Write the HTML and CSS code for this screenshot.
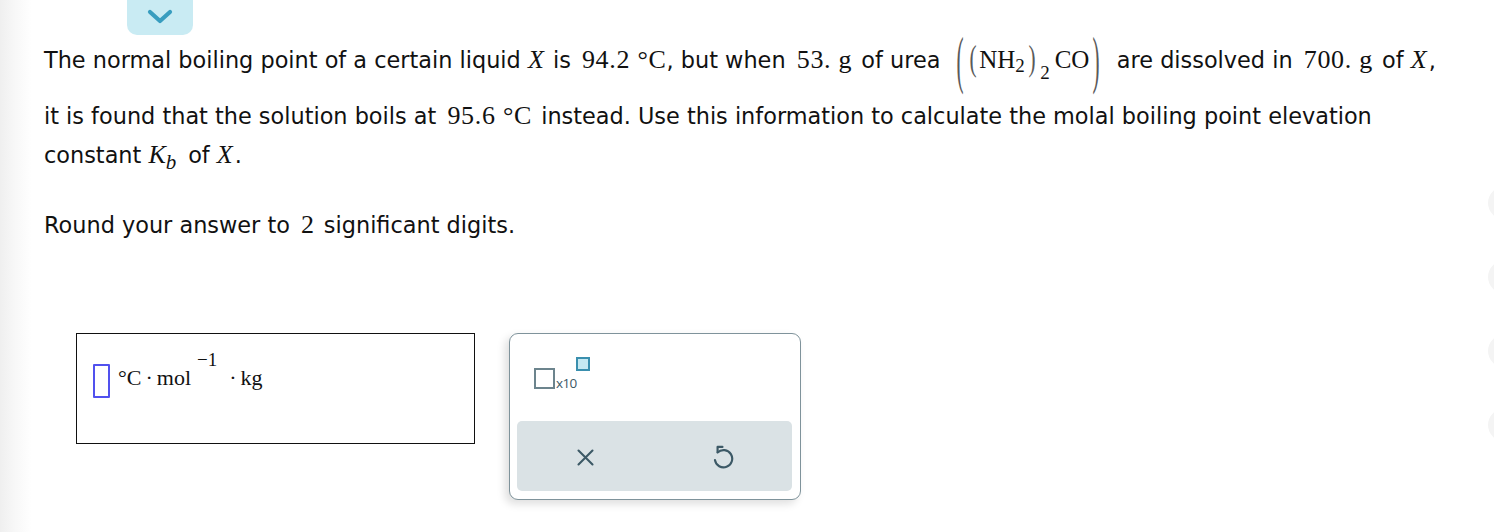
FILE: index.html
```html
<!DOCTYPE html>
<html>
<head>
<meta charset="utf-8">
<link rel="stylesheet" href="styles.css">
</head>
<body>
<div class="rail">
  <span class="dot"></span><span class="dot"></span><span class="dot"></span><span class="dot"></span>
</div>
<main class="page">
  <div class="tab">
    <svg width="26" height="16" viewBox="0 0 26 16"><path d="M3 3 L13 12 L23 3" fill="none" stroke="#389dbf" stroke-width="4.2" stroke-linecap="round" stroke-linejoin="round"/></svg>
  </div>

  <p class="q q1"><span class="l1">The normal boiling point of a certain liquid <i class="m v">X</i> is <span class="m tight">94.2 °C</span>, but when <span class="m">53. g</span> of urea <span class="chem m"><span class="bp">(</span><span class="ip">(</span>NH<sub class="s1">2</sub><span class="ip">)</span><sub class="s2">2</sub>CO<span class="bp">)</span></span> are dissolved in <span class="m">700. g</span> of <i class="m v">X</i>,</span><br>it is found that the solution boils at <span class="m">95.6 °C</span> instead. Use this information to calculate the molal boiling point elevation<br>constant <i class="m v">K</i><sub class="m kb">b</sub> of <i class="m v">X</i>.</p>

  <p class="q q2">Round your answer to <span class="m">2</span> significant digits.</p>

  <div class="answer-row">
    <div class="answer-box">
      <span class="slot"></span>
      <span class="unit">°C<span class="dotop">·</span>mol<sup class="exp">−1</sup><span class="dotop">·</span>kg</span>
    </div>

    <div class="tools">
      <div class="sci">
        <span class="sci-box"></span><span class="sci-x">x10</span><span class="sci-exp"></span>
      </div>
      <div class="actions">
        <button class="act" aria-label="clear">
          <svg width="24" height="24" viewBox="0 0 24 24"><path d="M4 4 L20 20 M20 4 L4 20" stroke="#3c5966" stroke-width="2.4" stroke-linecap="round" fill="none"/></svg>
        </button>
        <button class="act" aria-label="undo">
          <svg width="26" height="26" viewBox="0 0 24 24"><path d="M11.5 3.6 H7 V8.4" stroke="#3c5966" stroke-width="2" stroke-linecap="round" stroke-linejoin="round" fill="none"/><path d="M7 8.7 A8 8 0 1 1 4.6 15.8" stroke="#3c5966" stroke-width="2" stroke-linecap="round" fill="none"/></svg>
        </button>
      </div>
    </div>
  </div>
</main>
</body>
</html>
```

FILE: styles.css
```css
html, body {
  margin: 0;
  padding: 0;
}

body {
  width: 1494px;
  height: 532px;
  overflow: hidden;
  position: relative;
  background:
    linear-gradient(to right, #efefef 0px, #f7f7f7 14px, #ffffff 32px),
    #ffffff;
  font-family: "DejaVu Sans", Verdana, sans-serif;
  color: #111;
}

.page {
  padding-left: 44px;
}

.tab {
  margin-left: 83px;
  width: 66px;
  height: 35px;
  background: #c9ebf3;
  border-radius: 0 0 10px 10px;
  display: flex;
  align-items: center;
  justify-content: center;
}

.tab svg {
  margin-top: -2px;
}

.q {
  margin: 0;
  font-size: 22.4px;
  line-height: 39px;
  white-space: nowrap;
}

.q1 {
  margin-top: 1px;
}

.l1 {
  display: inline-block;
  height: 61px;
  line-height: 48px;
}

.m {
  font-family: "Liberation Serif", "Times New Roman", serif;
  font-size: 26px;
  line-height: 1;
  letter-spacing: 0.7px;
  margin: 0 2px 0 4px;
}

.m.tight {
  margin-right: 0;
}

i.m {
  font-style: italic;
}

.v {
  letter-spacing: 0;
  margin: 0 2px 0 0;
}

.kb {
  font-style: italic;
  font-size: 21px;
  vertical-align: -6px;
  line-height: 0;
  margin: 0 4px 0 -2px;
}

.chem {
  display: inline-block;
  letter-spacing: 0;
  margin: 0 6px 0 5px;
  font-size: 25px;
}

.chem sub {
  font-size: 19px;
  line-height: 0;
}

.chem .s1 {
  vertical-align: -4px;
  margin-right: 1px;
}

.chem .s2 {
  vertical-align: -11px;
  margin: 0 5px 0 2px;
}

.bp {
  display: inline-block;
  color: #5a5a5a;
  transform: translateY(3px) scale(0.85, 2.55);
  transform-origin: 50% 58%;
  margin: 0 3px;
}

.ip {
  display: inline-block;
  color: #5a5a5a;
  transform: scale(0.85, 1.45);
  transform-origin: 50% 62%;
  margin: 0 2px;
}

.q2 {
  margin-top: 31px;
}

.answer-row {
  display: flex;
  align-items: flex-start;
  gap: 34px;
  margin-top: 88px;
  margin-left: 32px;
}

.answer-box {
  box-sizing: border-box;
  width: 399px;
  height: 111px;
  border: 1px solid #111;
  display: flex;
  align-items: flex-start;
  padding: 30px 0 0 16px;
}

.slot {
  box-sizing: border-box;
  width: 17px;
  height: 34px;
  border: 2px solid #5151ee;
  border-radius: 1px;
  flex: none;
}

.unit {
  font-family: "Liberation Serif", "Times New Roman", serif;
  margin-left: 8px;
  margin-top: -4px;
  font-size: 22px;
  line-height: 26px;
  white-space: nowrap;
}

.dotop {
  margin: 0 4px;
}

.exp {
  font-size: 19px;
  vertical-align: 19px;
  line-height: 0;
  margin: 0 8px 0 6px;
}

.tools {
  box-sizing: border-box;
  width: 292px;
  height: 167px;
  border: 1px solid #7f939b;
  border-radius: 9px;
  background: #fff;
  box-shadow: -4px 4px 9px rgba(0, 0, 0, 0.13);
  padding: 23px 8px 8px 7px;
  display: flex;
  flex-direction: column;
  justify-content: space-between;
}

.sci {
  display: flex;
  align-items: flex-end;
  margin-left: 17px;
  height: 32px;
}

.sci-box {
  box-sizing: border-box;
  width: 21px;
  height: 21px;
  border: 2.5px solid #6c848d;
  background: #fff;
}

.sci-x {
  font-family: "Open Sans", "DejaVu Sans", sans-serif;
  font-size: 13.5px;
  color: #3c5966;
  letter-spacing: -0.6px;
  margin-left: 1px;
  line-height: 12px;
}

.sci-exp {
  box-sizing: border-box;
  width: 14px;
  height: 14px;
  border: 2px solid #3a8fae;
  background: #c6e9f2;
  align-self: flex-start;
  margin-left: -1px;
}

.actions {
  height: 70px;
  background: #dae2e5;
  border-radius: 5px;
  display: flex;
  align-items: center;
}

.act {
  flex: 1;
  height: 100%;
  border: 0;
  background: transparent;
  display: flex;
  align-items: center;
  justify-content: center;
  padding: 0;
}

.act:first-child svg {
  width: 21px;
  height: 21px;
  margin-left: -1px;
  margin-top: 2px;
}

.rail {
  position: absolute;
  right: -30px;
  top: 186px;
  display: flex;
  flex-direction: column;
  gap: 40px;
}

.dot {
  width: 36px;
  height: 34px;
  border-radius: 50%;
  background: #f4f4f4;
}
```
